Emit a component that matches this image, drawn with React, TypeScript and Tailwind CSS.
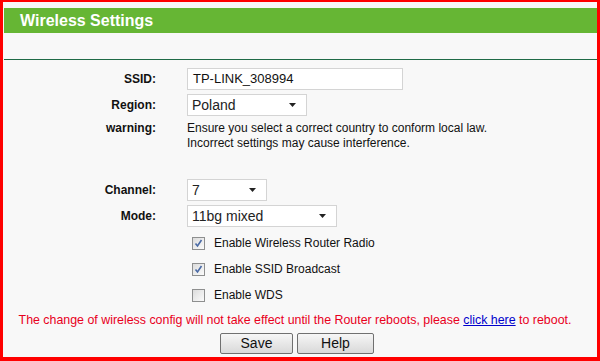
import React, { useState } from 'react';

const Arrow: React.FC = () => (
  <svg width="7" height="4" viewBox="0 0 7 4" className="shrink-0">
    <path d="M0 0h7L3.5 4z" fill="#222" />
  </svg>
);

const Select: React.FC<{ value: string; width: string }> = ({ value, width }) => (
  <div
    className={`${width} h-[22px] flex items-center justify-between pl-[4px] pr-[10px] bg-white border border-[#d4d4d4] text-[14px] text-[#222]`}
  >
    <span>{value}</span>
    <Arrow />
  </div>
);

const Check: React.FC<{ label: string; initial: boolean }> = ({ label, initial }) => {
  const [on, setOn] = useState(initial);
  return (
    <label className="h-[26px] flex items-center gap-[9px] cursor-pointer" onClick={() => setOn(!on)}>
      <span className="ml-[5px] w-[13px] h-[13px] border border-[#8e8f8f] bg-gradient-to-br from-[#dcdcdc] to-[#fbfbfb] flex items-center justify-center">
        {on && (
          <svg width="9" height="9" viewBox="0 0 9 9">
            <path d="M1.5 4.5l2 2.5 4-6" stroke="#4a6aa5" strokeWidth="1.6" fill="none" />
          </svg>
        )}
      </span>
      <span>{label}</span>
    </label>
  );
};

const Button: React.FC<{ label: string; width: string }> = ({ label, width }) => (
  <button
    className={`${width} h-[21px] rounded-[2px] border border-[#707070] bg-gradient-to-b from-[#f6f6f6] to-[#d9d9d9] text-[14px] text-[#111] leading-none`}
  >
    {label}
  </button>
);

export default function App() {
  return (
    <div
      className="w-[600px] h-[361px] border-[#ff0000] border-l-[3px] border-t-2 border-r-[3px] border-b-4 bg-[#f8f8f8] text-[12px] text-[#111] flex flex-col"
      style={{ fontFamily: '"Liberation Sans", Arial, sans-serif' }}
    >
      <div className="mt-[6px] ml-px h-[25px] bg-[#66b634] flex items-center pl-[16px]">
        <h1 className="text-white font-bold text-[16px]">Wireless Settings</h1>
      </div>
      <div className="mt-[26px] ml-px h-px bg-[#1f6a46]" />

      <div className="mt-[8px] grid grid-cols-[153px_1fr] gap-x-[31px] items-center">
        <div className="text-right font-bold h-[26px] leading-[22px]">SSID:</div>
        <div className="h-[26px]">
          <div className="w-[216px] h-[22px] bg-white border border-[#d4d4d4] pl-[5px] text-[13px] leading-[20px]">
            TP-LINK_308994
          </div>
        </div>

        <div className="text-right font-bold h-[26px] leading-[22px]">Region:</div>
        <div className="h-[26px]">
          <Select value="Poland" width="w-[120px]" />
        </div>

        <div className="self-start text-right font-bold leading-[15px] pt-[1px]">warning:</div>
        <div className="leading-[15px] pt-[1px]">
          Ensure you select a correct country to conform local law.
          <br />
          Incorrect settings may cause interference.
        </div>
      </div>

      <div className="mt-[28px] grid grid-cols-[153px_1fr] gap-x-[31px] items-center">
        <div className="text-right font-bold h-[26px] leading-[22px]">Channel:</div>
        <div className="h-[26px]">
          <Select value="7" width="w-[80px]" />
        </div>

        <div className="text-right font-bold h-[26px] leading-[22px]">Mode:</div>
        <div className="h-[26px]">
          <Select value="11bg mixed" width="w-[150px]" />
        </div>

        <div />
        <div className="flex flex-col -mt-[1px]">
          <Check label="Enable Wireless Router Radio" initial={true} />
          <Check label="Enable SSID Broadcast" initial={true} />
          <Check label="Enable WDS" initial={false} />
        </div>
      </div>

      <p className="mt-[3px] pr-[10px] text-center text-[12.4px] text-[#e8001c]">
        The change of wireless config will not take effect until the Router reboots, please{' '}
        <a href="#" className="text-[#0000cc] underline">click here</a> to reboot.
      </p>
      <div className="mt-[3px] flex justify-center gap-[4px] pr-[6px]">
        <Button label="Save" width="w-[73px]" />
        <Button label="Help" width="w-[77px]" />
      </div>
    </div>
  );
}
